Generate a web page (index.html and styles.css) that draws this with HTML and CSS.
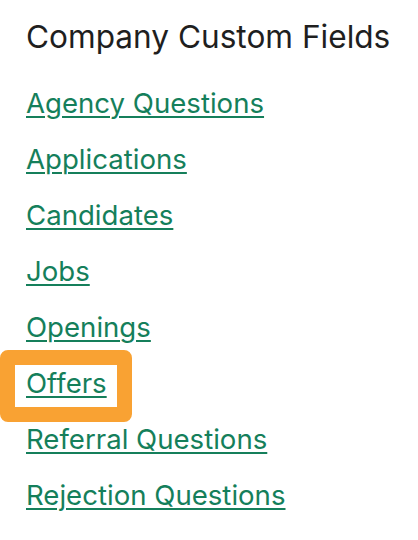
FILE: index.html
```html
<!DOCTYPE html>
<html lang="en">
<head>
<meta charset="utf-8">
<title>Company Custom Fields</title>
<link rel="stylesheet" href="styles.css">
</head>
<body>
<main class="panel">
  <h2 class="title">Company Custom Fields</h2>
  <ul class="links">
    <li><a href="#">Agency Questions</a></li>
    <li><a href="#">Applications</a></li>
    <li><a href="#">Candidates</a></li>
    <li><a href="#">Jobs</a></li>
    <li><a href="#">Openings</a></li>
    <li class="highlight"><a href="#">Offers</a></li>
    <li><a href="#">Referral Questions</a></li>
    <li><a href="#">Rejection Questions</a></li>
  </ul>
</main>
</body>
</html>
```
FILE: styles.css
```css
html, body {
  margin: 0;
  padding: 0;
  background: #ffffff;
}
body {
  font-family: Inter, "Noto Sans", "Liberation Sans", sans-serif;
}
.panel {
  padding: 17px 0 0 26px;
}
.title {
  margin: 0 0 18px 0;
  font-size: 31.6px;
  line-height: 40px;
  font-weight: 400;
  color: #1f1f1f;
  letter-spacing: 0;
}
.links {
  list-style: none;
  margin: 0;
  padding: 0;
}
.links li {
  position: relative;
  font-size: 27.6px;
  line-height: 56px;
}
.links a {
  color: #157f5b;
  text-decoration: underline;
  text-decoration-thickness: 2px;
  text-underline-offset: 3px;
}
.highlight::before {
  content: "";
  position: absolute;
  left: -26px;
  top: -5px;
  width: 102px;
  height: 42px;
  border: 15px solid #f9a233;
  border-radius: 8px;
  pointer-events: none;
}
```
